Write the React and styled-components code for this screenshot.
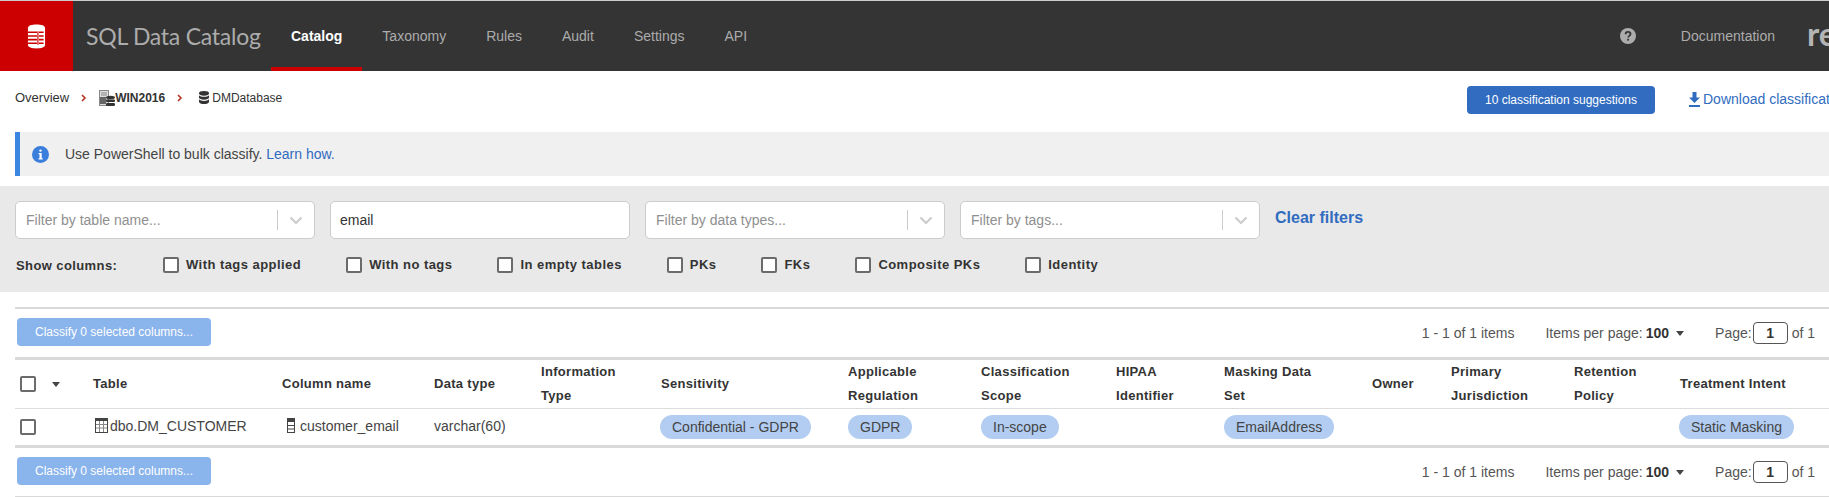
import React from 'react';
import styled, { createGlobalStyle } from 'styled-components';

const GlobalStyle = createGlobalStyle`
  html, body {
    margin: 0;
    background: #fff;
    font-family: "Liberation Sans", Arial, sans-serif;
    color: #333;
    overflow: hidden;
  }
`;

const blue = '#316cc0';
const gridColumns = '78px 189px 152px 107px 120px 187px 133px 135px 108px 148px 79px 123px 106px 130px';

const Page = styled.div`
  width: 1829px;
  height: 497px;
  overflow: hidden;
  padding-top: 1px;
  box-sizing: border-box;
  background: #fff;
  box-shadow: inset 0 1px 0 #ccc;
`;

const Header = styled.header`
  display: flex;
  align-items: stretch;
  height: 70px;
  background: #343434;
`;

const LogoTile = styled.div`
  width: 73px;
  background: #cc0000;
  display: flex;
  align-items: center;
  justify-content: center;
`;

const Product = styled.div`
  width: 198px;
  padding-left: 13px;
  box-sizing: border-box;
  display: flex;
  align-items: center;
  color: #acacac;
  font-family: "Lato", sans-serif;
  font-size: 23px;
  letter-spacing: -0.25px;
  white-space: nowrap;
`;

const NavItem = styled.a`
  display: flex;
  align-items: center;
  padding: 0 20px;
  font-size: 14px;
  color: ${p => (p.$active ? '#fff' : '#acacac')};
  font-weight: ${p => (p.$active ? 700 : 400)};
  box-shadow: ${p => (p.$active ? 'inset 0 -4px 0 #cc0000' : 'none')};
`;

const HeaderRight = styled.div`
  margin-left: auto;
  display: flex;
  align-items: center;
`;

const Documentation = styled.a`
  margin-left: 45px;
  font-size: 14px;
  color: #acacac;
`;

const Wordmark = styled.div`
  margin: -7px 0 0 32px;
  width: 22px;
  overflow: hidden;
  color: #b4b4b4;
  font-family: "Lato", sans-serif;
  font-weight: 700;
  font-size: 33px;
  line-height: 40px;
  white-space: nowrap;
`;

const Crumbs = styled.div`
  height: 61px;
  padding-left: 15px;
  display: flex;
  align-items: center;
`;

const Crumb = styled.span`
  display: flex;
  align-items: center;
  font-size: ${p => p.$size || 12}px;
  gap: ${p => p.$gap || 0}px;
  color: #333;
  font-weight: ${p => (p.$bold ? 700 : 400)};
  margin-top: -8px;
  svg {
    flex-shrink: 0;
  }
`;

const CrumbArrow = styled.span`
  display: flex;
  margin-top: -8px;
  padding: 0 ${p => p.$right}px 0 ${p => p.$left}px;
`;

const SuggestButton = styled.button`
  margin: -3px 0 0 auto;
  width: 188px;
  height: 28px;
  border: 0;
  border-radius: 4px;
  background: ${blue};
  color: #fff;
  font: 400 12px "Liberation Sans", sans-serif;
`;

const DownloadLink = styled.a`
  margin: -5px 0 0 34px;
  display: flex;
  align-items: center;
  gap: 3px;
  color: ${blue};
  font-size: 14px;
  white-space: nowrap;
  flex-shrink: 0;
  width: 140px;
  overflow: hidden;
  svg {
    flex-shrink: 0;
  }
`;

const Notice = styled.div`
  margin-left: 15px;
  height: 44px;
  border-left: 5px solid #3b86e0;
  background: #f0f0f0;
  display: flex;
  align-items: center;
  padding-left: 12px;
  gap: 16px;
  font-size: 14px;
  color: #444;
`;

const TextLink = styled.a`
  color: ${blue};
`;

const Filters = styled.section`
  margin-top: 10px;
  height: 106px;
  box-sizing: border-box;
  background: #e9e9e9;
  padding: 15px 0 0 15px;
`;

const FilterRow = styled.div`
  display: flex;
  gap: 15px;
`;

const SelectBox = styled.div`
  width: 300px;
  height: 38px;
  box-sizing: border-box;
  background: #fff;
  border: 1px solid #ccc;
  border-radius: 5px;
  display: flex;
  align-items: center;
  padding-left: ${p => (p.$plain ? 9 : 10)}px;
  font-size: 14px;
  color: ${p => (p.$plain ? '#333' : '#8f8f8f')};
`;

const SelectDivider = styled.span`
  margin-left: auto;
  width: 1px;
  height: 20px;
  background: #ccc;
`;

const SelectChevron = styled.span`
  width: 36px;
  display: flex;
  justify-content: center;
`;

const ClearLink = styled.a`
  align-self: flex-start;
  margin-top: 8px;
  color: ${blue};
  font-size: 16px;
  font-weight: 700;
`;

const ColumnOptions = styled.div`
  margin-top: 18px;
  padding-left: 1px;
  display: flex;
  align-items: center;
`;

const OptionsLabel = styled.span`
  width: 147px;
  font-size: 13px;
  font-weight: 700;
  letter-spacing: 0.4px;
  margin-top: 1px;
`;

const Option = styled.label`
  display: flex;
  align-items: center;
  gap: 7px;
  margin-right: 45px;
  font-size: 13px;
  font-weight: 700;
  letter-spacing: 0.45px;
  white-space: nowrap;
`;

const OptionText = styled.span`
  margin-top: -2px;
`;

const Check = styled.span`
  display: block;
  width: 16px;
  height: 16px;
  box-sizing: border-box;
  background: #fff;
  border: 2px solid #6b6b6b;
  border-radius: 2px;
  flex-shrink: 0;
`;

const Results = styled.section`
  margin: 15px 0 0 15px;
`;

const Rule = styled.div`
  height: ${p => p.$h || 3}px;
  background: #d9d9d9;
`;

const Toolbar = styled.div`
  height: 48px;
  display: flex;
  align-items: center;
  padding: 0 14px 0 2px;
  font-size: 14px;
  color: #555;
`;

const ClassifyButton = styled.button`
  width: 194px;
  height: 28px;
  margin-top: -2px;
  border: 0;
  border-radius: 4px;
  background: #8ab4ec;
  color: #fff;
  font: 400 12px "Liberation Sans", sans-serif;
`;

const Count = styled.span`
  margin-left: auto;
`;

const PerPage = styled.span`
  margin-left: 31px;
  display: flex;
  align-items: center;
  gap: 3px;
  b {
    color: #333;
  }
`;

const Caret = styled.span`
  margin-left: 4px;
  width: 0;
  height: 0;
  border: 4px solid transparent;
  border-top: 5px solid #444;
  border-bottom: 0;
`;

const PageBox = styled.span`
  margin-left: 31px;
  display: flex;
  align-items: center;
`;

const PageInput = styled.span`
  width: 35px;
  height: 22px;
  box-sizing: border-box;
  margin: 0 4px 0 1px;
  border: 1px solid #555;
  border-radius: 4px;
  color: #333;
  font-weight: 700;
  line-height: 20px;
  text-align: center;
`;

const HeadRow = styled.div`
  display: grid;
  grid-template-columns: ${gridColumns};
  height: 48px;
  align-items: center;
  border-bottom: 1px solid #ddd;
  font-size: 13px;
  font-weight: 700;
  line-height: 24px;
  letter-spacing: 0.3px;
`;

const BodyRow = styled.div`
  display: grid;
  grid-template-columns: ${gridColumns};
  height: 36px;
  align-items: center;
  font-size: 14px;
  color: #444;
`;

const SelectCell = styled.div`
  display: flex;
  align-items: center;
  padding-left: 5px;
  gap: 12px;
`;

const IconCell = styled.div`
  display: flex;
  align-items: center;
  gap: ${p => p.$gap || 2}px;
  padding-left: ${p => p.$indent || 0}px;
  margin-top: -3px;
  white-space: nowrap;
`;

const TextCell = styled.div`
  margin-top: -3px;
  white-space: nowrap;
`;

const Pill = styled.span`
  display: inline-block;
  height: 24px;
  line-height: 24px;
  padding: 0 12px;
  border-radius: 12px;
  background: #b2cdf1;
  color: #444;
  white-space: nowrap;
`;

const PillCell = styled.div`
  margin-left: ${p => p.$shift || 0}px;
`;

const DbLogo = () => (
  <svg width="19" height="25" viewBox="0 0 20 24" preserveAspectRatio="none">
    <path d="M1 4c0-2.500 4-3.500 9-3.500s9 1 9 3.500v16c0 2.500-4 3.500-9 3.500S1 22.500 1 20z" fill="#fff" />
    <path d="M1 8h9.500M12.500 8h5M1 11.500h9.500M12.500 11.500h5M1 15h9.500M12.500 15h5M1 18.500h9.500M12.500 18.500h5" stroke="#cc0000" strokeWidth="1.500" />
    <path d="M11.500 7v13" stroke="#cc0000" strokeWidth="1.200" />
  </svg>
);

const HelpIcon = () => (
  <svg width="16" height="16" viewBox="0 0 16 16">
    <circle cx="8" cy="8" r="8" fill="#acacac" />
    <path d="M5.600 6.200c0-1.500 1.100-2.300 2.500-2.300s2.400.8 2.400 2.100c0 1.900-2.300 1.800-2.300 3.500" fill="none" stroke="#343434" strokeWidth="1.800" />
    <rect x="7.200" y="10.800" width="1.800" height="1.800" fill="#343434" />
  </svg>
);

const Chevron = () => (
  <svg width="6" height="8" viewBox="0 0 6 8">
    <path d="M1 1l3 3-3 3" fill="none" stroke="#b5331f" strokeWidth="1.600" />
  </svg>
);

const ServerIcon = () => (
  <svg width="16" height="16" viewBox="0 0 16 16">
    <rect x="0.500" y="0.500" width="9" height="15" fill="#ddd" stroke="#888" />
    <path d="M2 3h6M2 5h6" stroke="#888" />
    <rect x="1" y="7" width="6" height="7" fill="#666" />
    <ellipse cx="11.500" cy="7.500" rx="4.500" ry="1.800" fill="#333" />
    <rect x="7" y="9.500" width="9" height="2.500" rx="1" fill="#333" />
    <rect x="7" y="13" width="9" height="3" rx="1.200" fill="#333" />
  </svg>
);

const DatabaseIcon = () => (
  <svg width="10" height="13" viewBox="0 0 12 14" preserveAspectRatio="none">
    <ellipse cx="6" cy="2.500" rx="6" ry="2.500" fill="#333" />
    <path d="M0 4.500c1 1.300 3.500 1.800 6 1.800s5-.5 6-1.800v2.500c0 1.400-3 2.300-6 2.300S0 8.400 0 7z" fill="#333" />
    <path d="M0 9c1 1.300 3.500 1.800 6 1.800s5-.5 6-1.800v2.500C12 12.900 9 14 6 14s-6-1.100-6-2.500z" fill="#333" />
  </svg>
);

const DownloadIcon = () => (
  <svg width="11" height="15" viewBox="0 0 11 15">
    <path d="M3.500 0h4v5.500H11L5.500 11 0 5.500h3.500z" fill={blue} />
    <rect y="13" width="11" height="2" fill={blue} />
  </svg>
);

const InfoIcon = () => (
  <svg width="17" height="17" viewBox="0 0 17 17">
    <circle cx="8.500" cy="8.500" r="8.500" fill="#3b7fdc" />
    <rect x="7.300" y="3.400" width="2.400" height="2.400" rx="1.200" fill="#fff" />
    <path d="M6.600 7h3.100v5.200h1v1.200H6.600v-1.200h.9V8.200h-.9z" fill="#fff" />
  </svg>
);

const SelectArrow = () => (
  <svg width="14" height="9" viewBox="0 0 14 9">
    <path d="M1.500 1.500L7 7l5.500-5.500" fill="none" stroke="#ccc" strokeWidth="2.200" />
  </svg>
);

const TableIcon = () => (
  <svg width="13" height="15" viewBox="0 0 13 15">
    <rect x="0.500" y="0.500" width="12" height="14" fill="#fff" stroke="#444" />
    <rect x="0" y="0" width="13" height="3" fill="#444" />
    <path d="M4.500 3v11M8.500 3v11M1 6.500h11M1 10h11" stroke="#888" />
  </svg>
);

const ColumnIcon = () => (
  <svg width="8" height="15" viewBox="0 0 8 15">
    <rect x="0.500" y="0.500" width="7" height="14" fill="#fff" stroke="#444" />
    <rect x="0" y="0" width="8" height="4" fill="#444" />
    <path d="M1 7.500h6M1 11h6" stroke="#444" />
  </svg>
);

const Select = ({ children }) => (
  <SelectBox>
    {children}
    <SelectDivider />
    <SelectChevron><SelectArrow /></SelectChevron>
  </SelectBox>
);

const Pagination = () => (
  <>
    <Count>1 - 1 of 1 items</Count>
    <PerPage>Items per page: <b>100</b><Caret /></PerPage>
    <PageBox>Page:<PageInput>1</PageInput>of 1</PageBox>
  </>
);

const options = ['With tags applied', 'With no tags', 'In empty tables', 'PKs', 'FKs', 'Composite PKs', 'Identity'];

const headings = [
  ['Table'],
  ['Column name'],
  ['Data type'],
  ['Information', 'Type'],
  ['Sensitivity'],
  ['Applicable', 'Regulation'],
  ['Classification', 'Scope'],
  ['HIPAA', 'Identifier'],
  ['Masking Data', 'Set'],
  ['Owner'],
  ['Primary', 'Jurisdiction'],
  ['Retention', 'Policy'],
  ['Treatment Intent'],
];

export default function App() {
  return (
    <Page>
      <GlobalStyle />
      <Header>
        <LogoTile><DbLogo /></LogoTile>
        <Product>SQL Data Catalog</Product>
        <NavItem $active>Catalog</NavItem>
        <NavItem>Taxonomy</NavItem>
        <NavItem>Rules</NavItem>
        <NavItem>Audit</NavItem>
        <NavItem>Settings</NavItem>
        <NavItem>API</NavItem>
        <HeaderRight>
          <HelpIcon />
          <Documentation>Documentation</Documentation>
          <Wordmark>redgate</Wordmark>
        </HeaderRight>
      </Header>

      <Crumbs>
        <Crumb $size={13}>Overview</Crumb>
        <CrumbArrow $left={12} $right={12}><Chevron /></CrumbArrow>
        <Crumb $bold><ServerIcon />WIN2016</Crumb>
        <CrumbArrow $left={12} $right={16}><Chevron /></CrumbArrow>
        <Crumb $gap={3}><DatabaseIcon />DMDatabase</Crumb>
        <SuggestButton>10 classification suggestions</SuggestButton>
        <DownloadLink><DownloadIcon />Download classifications</DownloadLink>
      </Crumbs>

      <Notice>
        <InfoIcon />
        <span>Use PowerShell to bulk classify. <TextLink>Learn how.</TextLink></span>
      </Notice>

      <Filters>
        <FilterRow>
          <Select>Filter by table name...</Select>
          <SelectBox $plain>email</SelectBox>
          <Select>Filter by data types...</Select>
          <Select>Filter by tags...</Select>
          <ClearLink>Clear filters</ClearLink>
        </FilterRow>
        <ColumnOptions>
          <OptionsLabel>Show columns:</OptionsLabel>
          {options.map(o => (
            <Option key={o}><Check /><OptionText>{o}</OptionText></Option>
          ))}
        </ColumnOptions>
      </Filters>

      <Results>
        <Rule $h={2} />
        <Toolbar>
          <ClassifyButton>Classify 0 selected columns...</ClassifyButton>
          <Pagination />
        </Toolbar>
        <Rule />
        <HeadRow>
          <SelectCell><Check /><Caret /></SelectCell>
          {headings.map(h => (
            <div key={h[0]}>{h.map(line => <div key={line}>{line}</div>)}</div>
          ))}
        </HeadRow>
        <BodyRow>
          <SelectCell><Check /></SelectCell>
          <IconCell $indent={2}><TableIcon />dbo.DM_CUSTOMER</IconCell>
          <IconCell $gap={5} $indent={5}><ColumnIcon />customer_email</IconCell>
          <TextCell>varchar(60)</TextCell>
          <div />
          <PillCell $shift={-1}><Pill>Confidential - GDPR</Pill></PillCell>
          <PillCell><Pill>GDPR</Pill></PillCell>
          <PillCell><Pill>In-scope</Pill></PillCell>
          <div />
          <PillCell><Pill>EmailAddress</Pill></PillCell>
          <div />
          <div />
          <div />
          <PillCell $shift={-1}><Pill>Static Masking</Pill></PillCell>
        </BodyRow>
        <Rule />
        <Toolbar>
          <ClassifyButton>Classify 0 selected columns...</ClassifyButton>
          <Pagination />
        </Toolbar>
        <Rule $h={2} />
      </Results>
    </Page>
  );
}
